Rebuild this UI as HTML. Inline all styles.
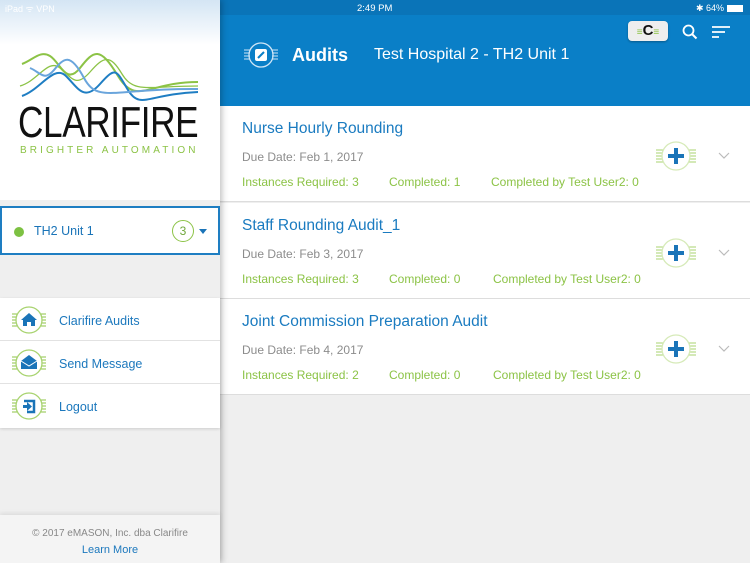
<!DOCTYPE html>
<html><head><meta charset="utf-8"><style>
*{margin:0;padding:0;box-sizing:border-box}
body{width:750px;height:563px;overflow:hidden;font-family:"Liberation Sans",sans-serif;background:#efefef;position:relative}
.abs{position:absolute}
#side{left:0;top:0;width:220px;height:563px;background:#efefef;z-index:2;box-shadow:2px 0 6px rgba(0,0,0,.25)}
#logo{left:0;top:0;width:220px;height:200px;background:linear-gradient(#d4e5f4 0px,#fff 45px,#fff)}
#unit{left:0;top:206px;width:220px;height:49px;border:2px solid #1e7ec2;background:#fff}
.menu{left:0;top:298px;width:220px;height:130px;background:#fff;box-shadow:0 1px 3px rgba(0,0,0,.15)}
.mi{height:43px;border-bottom:1px solid #e2e2e2;position:relative;font-size:12.5px;color:#1c78bd}
.mi span{position:absolute;left:59px;top:16px}
.mi svg{position:absolute;left:10px;top:7px}
#foot{left:0;top:515px;width:220px;height:48px;background:#f4f4f4;box-shadow:0 -2px 4px rgba(0,0,0,.08);text-align:center;font-size:10px;color:#888}
#hdr{left:220px;top:0;width:530px;height:106px;background:#0a7fc7}
.row{left:220px;width:530px;height:96px;background:#fff;border-bottom:1px solid #ddd}
.row .t{position:absolute;left:22px;top:14px;font-size:15.5px;color:#1a7bc0}
.row .d{position:absolute;left:22px;top:44px;font-size:12px;color:#8c8c8c}
.row .g{position:absolute;top:69px;font-size:12px;color:#8cc346}
.row svg.p{position:absolute;left:434px;top:34px}
.row .ch{position:absolute;left:498px;top:46px}
</style></head><body>
<div id="side" class="abs">
 <div id="logo" class="abs">
  <div class="abs" style="left:5px;top:2px;font-size:9px;color:#fff">iPad ᯤ VPN</div>
  <svg class="abs" style="left:18px;top:46px" width="182" height="60" viewBox="0 0 182 60">
   <path d="M4 18 C15 14 22 4 32 10 S48 40 62 22 S82 0 100 30 S130 36 180 36" fill="none" stroke="#8cc346" stroke-width="2"/>
   <path d="M2 40 C20 35 30 12 42 22 S58 42 72 26 S92 8 104 28 S130 40 180 40" fill="none" stroke="#8cc346" stroke-width="1.3"/>
   <path d="M4 50 C22 44 36 18 48 30 S66 56 82 38 S98 24 110 44 S130 48 180 46" fill="none" stroke="#1f7ec3" stroke-width="2"/>
   <path d="M12 22 C22 26 26 36 36 24 S52 6 66 32 S96 42 180 43" fill="none" stroke="#6aa5dc" stroke-width="2"/>
  </svg>
  <div class="abs" style="left:18px;top:101px;font-size:44px;line-height:44px;color:#111;transform:scaleX(0.8);transform-origin:left;letter-spacing:-0.5px">CLARIFIRE</div>
  <div class="abs" style="left:20px;top:145px;font-size:10px;color:#8cc346;letter-spacing:3.1px">BRIGHTER AUTOMATION</div>
 </div>
 <div id="unit" class="abs">
  <div class="abs" style="left:12px;top:19px;width:10px;height:10px;border-radius:50%;background:#7dc142"></div>
  <div class="abs" style="left:32px;top:16px;font-size:12.5px;color:#1a74b8">TH2 Unit 1</div>
  <div class="abs" style="left:170px;top:12px;width:22px;height:22px;border:1.3px solid #8cc346;border-radius:50%;text-align:center;font-size:12px;line-height:20px;color:#6fa73a">3</div>
  <div class="abs" style="left:197px;top:21px;border-left:4px solid transparent;border-right:4px solid transparent;border-top:5px solid #1a74b8"></div>
 </div>
 <div class="menu abs">
  <div class="mi"><svg width="38" height="30" viewBox="0 0 38 30"><g stroke="#8cc346" stroke-width="1"><path d="M2 9h8M2 12h8M2 15h8M2 18h8M2 21h8M28 9h8M28 12h8M28 15h8M28 18h8M28 21h8"/></g><circle cx="19" cy="15" r="13" fill="#fff" stroke="#a8d36f" stroke-width="1.3"/><path d="M11 15l8-7 8 7h-2v6h-4v-4h-4v4h-4v-6z" fill="#1a74b8"/></svg><span>Clarifire Audits</span></div>
  <div class="mi"><svg width="38" height="30" viewBox="0 0 38 30"><g stroke="#8cc346"><path d="M2 9h8M2 12h8M2 15h8M2 18h8M2 21h8M28 9h8M28 12h8M28 15h8M28 18h8M28 21h8"/></g><circle cx="19" cy="15" r="13" fill="#fff" stroke="#a8d36f" stroke-width="1.3"/><path d="M11 13l8-6 8 6v8h-16z" fill="#1a74b8"/><path d="M11 13l8 5 8-5" fill="none" stroke="#fff"/></svg><span>Send Message</span></div>
  <div class="mi" style="border:none"><svg width="38" height="30" viewBox="0 0 38 30"><g stroke="#8cc346"><path d="M2 9h8M2 12h8M2 15h8M2 18h8M2 21h8M28 9h8M28 12h8M28 15h8M28 18h8M28 21h8"/></g><circle cx="19" cy="15" r="13" fill="#fff" stroke="#a8d36f" stroke-width="1.3"/><path d="M14 10h10v11h-7" fill="none" stroke="#1a74b8" stroke-width="2.5"/><path d="M13 14h4v-3l5 4.5-5 4.5v-3h-4z" fill="#1a74b8"/></svg><span>Logout</span></div>
 </div>
 <div id="foot" class="abs"><div style="margin-top:13px">© 2017 eMASON, Inc. dba Clarifire</div><div style="margin-top:5px;font-size:11px;color:#1c78bd">Learn More</div></div>
</div>

<div id="hdr" class="abs">
 <div class="abs" style="left:0;top:0;width:530px;height:15px;background:#0a74b8"></div>
 <div class="abs" style="left:137px;top:3px;font-size:9.5px;color:#fff">2:49 PM</div>
 <div class="abs" style="left:476px;top:3px;font-size:9px;color:#fff">✱ 64% <span style="display:inline-block;width:16px;height:7px;background:#fff;vertical-align:-1px"></span></div>
 <svg class="abs" style="left:20px;top:40px" width="42" height="30" viewBox="0 0 42 30"><g stroke="#cfe6f7"><path d="M4 10h6M4 13h6M4 16h6M4 19h6M32 10h6M32 13h6M32 16h6M32 19h6"/></g><circle cx="21" cy="15" r="12" fill="none" stroke="#cfe6f7" stroke-width="1.3"/><rect x="15" y="9" width="12" height="12" rx="2" fill="#fff"/><path d="M18 18l6-6" stroke="#0a7fc7" stroke-width="2"/></svg>
 <div class="abs" style="left:72px;top:45px;font-size:18px;font-weight:bold;color:#fff">Audits</div>
 <div class="abs" style="left:154px;top:46px;font-size:16px;color:#fff">Test Hospital 2 - TH2 Unit 1</div>
 <div class="abs" style="left:408px;top:21px;width:40px;height:20px;background:#eee;border-radius:4px;box-shadow:0 1px 2px rgba(0,0,0,.3);font-weight:bold;font-size:15px;text-align:center;line-height:20px;color:#111"><span style="color:#8cc346;font-size:10px">≡</span>C<span style="color:#8cc346;font-size:10px">≡</span></div>
 <svg class="abs" style="left:462px;top:24px" width="16" height="16"><circle cx="6.5" cy="6.5" r="5" fill="none" stroke="#fff" stroke-width="1.8"/><path d="M10 10l4.5 4.5" stroke="#fff" stroke-width="2"/></svg>
 <svg class="abs" style="left:491px;top:25px" width="20" height="14"><path d="M1 2h18M1 7h13M1 12h7" stroke="#fff" stroke-width="1.8"/></svg>
</div>

<div class="row abs" style="top:106px">
 <div class="t">Nurse Hourly Rounding</div><div class="d">Due Date: Feb 1, 2017</div>
 <div class="g" style="left:22px">Instances Required: 3</div><div class="g" style="left:169px">Completed: 1</div><div class="g" style="left:271px">Completed by Test User2: 0</div>
 <svg class="p" width="44" height="32" viewBox="0 0 44 32"><g stroke="#a8d36f"><path d="M2 10h9M2 13h9M2 16h9M2 19h9M2 22h9M33 10h9M33 13h9M33 16h9M33 19h9M33 22h9"/></g><circle cx="22" cy="16" r="14" fill="#fff" stroke="#d6eab8" stroke-width="1.3"/><path d="M22 8v16M14 16h16" stroke="#1a74b8" stroke-width="4"/></svg>
 <svg class="ch" width="12" height="8"><path d="M1 1l5 5 5-5" fill="none" stroke="#bbb" stroke-width="1.2"/></svg>
</div>
<div class="row abs" style="top:203px">
 <div class="t">Staff Rounding Audit_1</div><div class="d">Due Date: Feb 3, 2017</div>
 <div class="g" style="left:22px">Instances Required: 3</div><div class="g" style="left:169px">Completed: 0</div><div class="g" style="left:273px">Completed by Test User2: 0</div>
 <svg class="p" width="44" height="32" viewBox="0 0 44 32"><g stroke="#a8d36f"><path d="M2 10h9M2 13h9M2 16h9M2 19h9M2 22h9M33 10h9M33 13h9M33 16h9M33 19h9M33 22h9"/></g><circle cx="22" cy="16" r="14" fill="#fff" stroke="#d6eab8" stroke-width="1.3"/><path d="M22 8v16M14 16h16" stroke="#1a74b8" stroke-width="4"/></svg>
 <svg class="ch" width="12" height="8"><path d="M1 1l5 5 5-5" fill="none" stroke="#bbb" stroke-width="1.2"/></svg>
</div>
<div class="row abs" style="top:299px">
 <div class="t">Joint Commission Preparation Audit</div><div class="d">Due Date: Feb 4, 2017</div>
 <div class="g" style="left:22px">Instances Required: 2</div><div class="g" style="left:169px">Completed: 0</div><div class="g" style="left:273px">Completed by Test User2: 0</div>
 <svg class="p" width="44" height="32" viewBox="0 0 44 32"><g stroke="#a8d36f"><path d="M2 10h9M2 13h9M2 16h9M2 19h9M2 22h9M33 10h9M33 13h9M33 16h9M33 19h9M33 22h9"/></g><circle cx="22" cy="16" r="14" fill="#fff" stroke="#d6eab8" stroke-width="1.3"/><path d="M22 8v16M14 16h16" stroke="#1a74b8" stroke-width="4"/></svg>
 <svg class="ch" width="12" height="8"><path d="M1 1l5 5 5-5" fill="none" stroke="#bbb" stroke-width="1.2"/></svg>
</div>
</body></html>
